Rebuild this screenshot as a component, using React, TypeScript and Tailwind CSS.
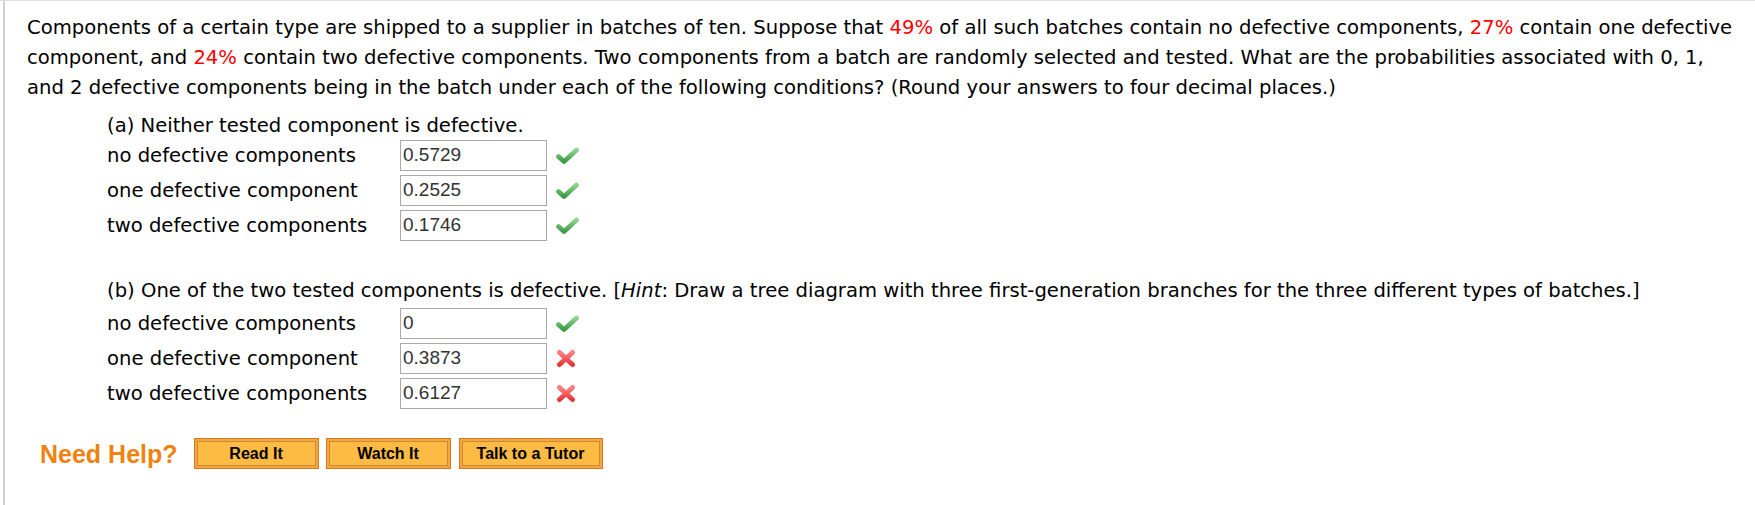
import React from 'react'

const body = '"DejaVu Sans", Verdana, sans-serif'

function Check() {
  return (
    <svg width="23" height="17" viewBox="0 0 23 17">
      <defs>
        <linearGradient id="chk" x1="0" y1="0" x2="0" y2="1">
          <stop offset="0" stopColor="#8ed48e" />
          <stop offset="1" stopColor="#3e9b45" />
        </linearGradient>
      </defs>
      <path
        d="M2.5 9.5 L8 14.5 L20.5 3"
        fill="none"
        stroke="url(#chk)"
        strokeWidth="4.8"
        strokeLinecap="round"
        strokeLinejoin="round"
      />
    </svg>
  )
}

function Cross() {
  return (
    <svg width="20" height="19" viewBox="0 0 20 19">
      <defs>
        <linearGradient id="crs" x1="0" y1="0" x2="0" y2="1">
          <stop offset="0" stopColor="#ff8080" />
          <stop offset="1" stopColor="#e23b3b" />
        </linearGradient>
      </defs>
      <path
        d="M3.5 3.5 L16.5 15.5 M16.5 3.5 L3.5 15.5"
        fill="none"
        stroke="url(#crs)"
        strokeWidth="5"
        strokeLinecap="round"
      />
    </svg>
  )
}

type Row = { label: string; value: string; ok: boolean }

function AnswerRow({ label, value, ok }: Row) {
  return (
    <div className="flex items-center h-[31px] mb-[4px]">
      <span className="w-[293px] text-[19.6px] leading-[30px] whitespace-nowrap">{label}</span>
      <div
        className="w-[147px] h-[31px] border border-[#a9a9a9] bg-white pl-[2px] flex items-center text-[19px] text-[#333]"
        style={{ fontFamily: '"Liberation Sans", Arial, sans-serif' }}
      >
        {value}
      </div>
      <span className="ml-[9px] flex items-center">{ok ? <Check /> : <Cross />}</span>
    </div>
  )
}

function HelpButton({ label, w }: { label: string; w: string }) {
  return (
    <button className={`${w} h-[31px] border border-[#d27a22] bg-[#f7a53a] p-[2px] cursor-pointer`}>
      <span className="h-full w-full flex items-center justify-center border border-[#c88a3c] bg-[#fdbb43] text-[16px] font-bold text-black">
        {label}
      </span>
    </button>
  )
}

const partA: Row[] = [
  { label: 'no defective components', value: '0.5729', ok: true },
  { label: 'one defective component', value: '0.2525', ok: true },
  { label: 'two defective components', value: '0.1746', ok: true },
]

const partB: Row[] = [
  { label: 'no defective components', value: '0', ok: true },
  { label: 'one defective component', value: '0.3873', ok: false },
  { label: 'two defective components', value: '0.6127', ok: false },
]

export default function App() {
  return (
    <div className="w-full h-[505px] bg-white border-t border-[#dedede] text-black" style={{ fontFamily: body }}>
      <div className="ml-[3px] h-full border-l-2 border-[#cfcfcf] pl-[22px] pt-[12px] pr-[16px]">
        {/* Question */}
        <p className="text-[19.6px] leading-[30px]">
          Components of a certain type are shipped to a supplier in batches of ten. Suppose that{' '}
          <span className="text-[#ff0000]">49%</span> of all such batches contain no defective components,{' '}
          <span className="text-[#ff0000]">27%</span> contain one defective component, and{' '}
          <span className="text-[#ff0000]">24%</span> contain two defective components. Two components from a batch
          are randomly selected and tested. What are the probabilities associated with 0, 1, and 2 defective
          components being in the batch under each of the following conditions? (Round your answers to four decimal
          places.)
        </p>

        {/* Part (a) */}
        <div className="ml-[80px] mt-[9px]">
          <p className="text-[19.6px] leading-[28px]">(a) Neither tested component is defective.</p>
          {partA.map((r) => (
            <AnswerRow key={r.label} {...r} />
          ))}
        </div>

        {/* Part (b) */}
        <div className="ml-[80px] mt-[32px]">
          <p className="text-[19.6px] leading-[35px]">
            (b) One of the two tested components is defective. [<i>Hint</i>: Draw a tree diagram with three
            first-generation branches for the three different types of batches.]
          </p>
          {partB.map((r) => (
            <AnswerRow key={r.label} {...r} />
          ))}
        </div>

        {/* Help */}
        <div className="flex items-center mt-[29px] ml-[13px]" style={{ fontFamily: '"Liberation Sans", Arial, sans-serif' }}>
          <span className="text-[25px] font-bold text-[#f0820f] mr-[16px] leading-[28px]">Need Help?</span>
          <HelpButton label="Read It" w="w-[125px]" />
          <span className="w-[7px]" />
          <HelpButton label="Watch It" w="w-[125px]" />
          <span className="w-[8px]" />
          <HelpButton label="Talk to a Tutor" w="w-[144px]" />
        </div>
      </div>
    </div>
  )
}
